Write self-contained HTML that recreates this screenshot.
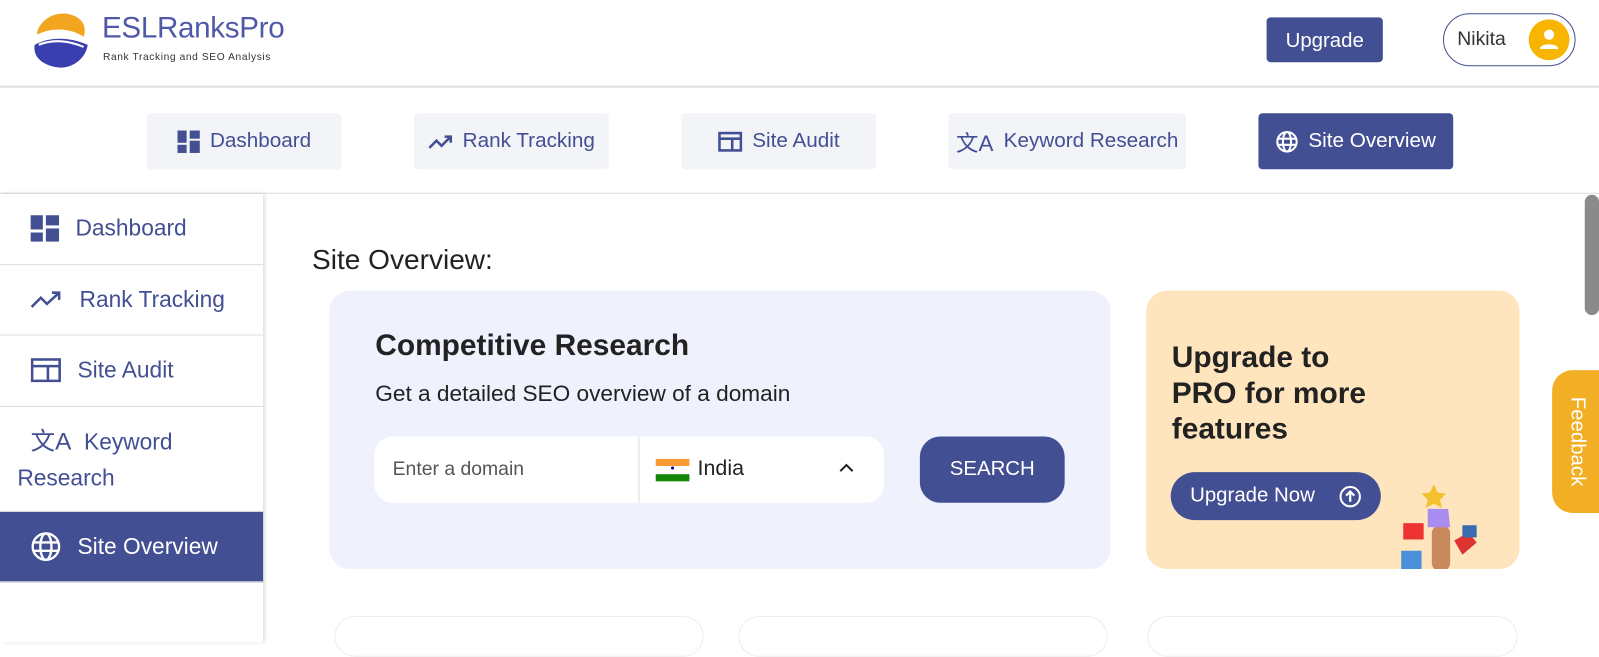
<!DOCTYPE html>
<html><head><meta charset="utf-8"><style>
*{box-sizing:border-box;margin:0;padding:0}
html,body{width:1599px;height:624px;overflow:hidden;background:#fff}
body{font-family:"Liberation Sans",sans-serif;color:#222}
#w{position:absolute;left:0;top:0;width:1568px;height:612px;transform:scale(1.0198);transform-origin:0 0}
.hdr{position:absolute;left:0;top:0;width:1568px;height:86px;border-bottom:2px solid #ddd}
.nav{position:absolute;top:88px;left:0;width:1568px;height:102px;border-bottom:1px solid #ddd}
.nb{position:absolute;top:23px;height:55px;background:#f3f4f8;border-radius:4px;display:flex;align-items:center;justify-content:center;gap:10px;font-size:20.3px;color:#434f93}
.nb.a{background:#434f93;color:#fff}
.side{position:absolute;left:0;top:190px;width:258px;height:440px;box-shadow:2px 0 4px rgba(0,0,0,.15)}
.si{height:69.5px;border-bottom:1px solid #ddd;display:flex;align-items:center;padding-left:30px;gap:16px;font-size:22.3px;color:#434f93}
.si.a{background:#434f93;color:#fff}
</style></head><body><div id="w">
<div class="hdr">
<svg style="position:absolute;left:30px;top:10px" width="58" height="58" viewBox="0 0 58 58"><path d="M6 24C8 8 28 -2 44 6C52 10 55 18 52 26C40 18 22 16 6 24Z" fill="#f2a51f"/><path d="M4 34C18 26 38 26 56 34C54 48 40 58 26 56C12 54 2 46 4 34Z" fill="#3a3fb0"/><path d="M6 28C22 22 40 24 54 30" stroke="#fff" stroke-width="3" fill="none"/><path d="M8 34C22 28 38 30 52 36" stroke="#fff" stroke-width="2" fill="none"/></svg>
<div style="position:absolute;left:100px;top:12px;font-size:29px;color:#5058a8;letter-spacing:-0.3px">ESLRanksPro</div>
<div style="position:absolute;left:101px;top:51px;font-size:10px;color:#333;letter-spacing:.6px">Rank Tracking and SEO Analysis</div>
<div style="position:absolute;left:1242px;top:17px;width:114px;height:44px;background:#434f93;border-radius:4px;color:#fff;font-size:20px;line-height:46px;text-align:center">Upgrade</div>
<div style="position:absolute;left:1415px;top:13px;width:130px;height:52px;border:1px solid #434f93;border-radius:26px;display:flex;align-items:center;padding-left:13px;font-size:19px;color:#333">Nikita<div style="position:absolute;right:5px;top:5px;width:40px;height:40px;border-radius:50%;background:#f7b500"><svg width="40" height="40" viewBox="0 0 40 40"><circle cx="20" cy="15" r="5" fill="#fff"/><path d="M11 29c0-6 18-6 18 0z" fill="#fff"/></svg></div></div>
</div>
<div class="nav">
<div class="nb" style="left:144px;width:191px"><svg width="22" height="22"><rect x="0" y="0" width="9" height="12" fill="#434f93"/><rect x="12" y="0" width="10" height="8" fill="#434f93"/><rect x="0" y="14" width="9" height="8" fill="#434f93"/><rect x="12" y="10" width="10" height="12" fill="#434f93"/></svg>Dashboard</div>
<div class="nb" style="left:406px;width:191px"><svg width="24" height="16"><path d="M1 14l7-7 5 5 9-9M16 3h6v6" stroke="#434f93" stroke-width="2.5" fill="none"/></svg>Rank Tracking</div>
<div class="nb" style="left:668px;width:191px"><svg width="24" height="20"><rect x="1.5" y="1.5" width="21" height="17" fill="none" stroke="#434f93" stroke-width="2.5"/><path d="M1 7h22M14 7v12" stroke="#434f93" stroke-width="2.5"/></svg>Site Audit</div>
<div class="nb" style="left:930px;width:233px"><span style="font-size:22px">文A</span>Keyword Research</div>
<div class="nb a" style="left:1234px;width:191px"><svg width="22" height="22" viewBox="0 0 22 22"><circle cx="11" cy="11" r="9.5" stroke="#fff" stroke-width="2" fill="none"/><ellipse cx="11" cy="11" rx="4" ry="9.5" stroke="#fff" stroke-width="2" fill="none"/><path d="M2 8h18M2 14h18" stroke="#fff" stroke-width="2"/></svg>Site Overview</div>
</div>
<div class="side">
<div class="si"><svg width="28" height="26"><rect x="0" y="0" width="12" height="14" fill="#434f93"/><rect x="15" y="0" width="13" height="10" fill="#434f93"/><rect x="0" y="17" width="12" height="9" fill="#434f93"/><rect x="15" y="13" width="13" height="13" fill="#434f93"/></svg>Dashboard</div>
<div class="si"><svg width="32" height="18"><path d="M1 16l9-9 6 6 12-11M21 2h7v7" stroke="#434f93" stroke-width="2.5" fill="none"/></svg>Rank Tracking</div>
<div class="si"><svg width="30" height="24"><rect x="1.5" y="1.5" width="27" height="21" fill="none" stroke="#434f93" stroke-width="2.5"/><path d="M1 8h28M17 8v15" stroke="#434f93" stroke-width="2.5"/></svg>Site Audit</div>
<div class="si" style="height:103px;display:block;padding:17px 0 0 17px;line-height:35px"><span style="margin-left:13px;font-size:24px">文A</span>&nbsp; Keyword<br>Research</div>
<div class="si a"><svg width="30" height="30" viewBox="0 0 22 22"><circle cx="11" cy="11" r="9.5" stroke="#fff" stroke-width="1.7" fill="none"/><ellipse cx="11" cy="11" rx="4" ry="9.5" stroke="#fff" stroke-width="1.7" fill="none"/><path d="M2 8h18M2 14h18" stroke="#fff" stroke-width="1.7"/></svg>Site Overview</div>
</div>
<div style="position:absolute;left:306px;top:239px;font-size:27.5px;color:#222">Site Overview:</div>
<div style="position:absolute;left:323px;top:285px;width:766px;height:273px;background:#eff1fd;border-radius:20px">
<div style="position:absolute;left:45px;top:37px;font-size:29.3px;font-weight:bold;color:#222">Competitive Research</div>
<div style="position:absolute;left:45px;top:88px;font-size:22.2px;color:#222">Get a detailed SEO overview of a domain</div>
<div style="position:absolute;left:44px;top:143px;width:500px;height:65px;background:#fff;border-radius:18px">
<div style="position:absolute;left:18px;top:22px;font-size:19px;color:#555">Enter a domain</div>
<div style="position:absolute;left:259px;top:0;width:1px;height:65px;background:#ddd"></div>
<div style="position:absolute;left:276px;top:22px;width:33px;height:22px"><div style="height:7px;background:#f93"></div><div style="height:8px;background:#fff;text-align:center;line-height:6px;font-size:7px;color:#008">●</div><div style="height:7px;background:#138808"></div></div>
<div style="position:absolute;left:317px;top:20px;font-size:21px;color:#222">India</div>
<svg style="position:absolute;left:456px;top:26px" width="14" height="10"><path d="M1 8l6-6 6 6" stroke="#222" stroke-width="2" fill="none"/></svg>
</div>
<div style="position:absolute;left:579px;top:143px;width:142px;height:65px;background:#434f93;border-radius:20px;color:#fff;font-size:20px;display:flex;align-items:center;justify-content:center">SEARCH</div>
</div>
<div style="position:absolute;left:1124px;top:285px;width:366px;height:273px;background:#ffe5bd;border-radius:20px;overflow:hidden">
<div style="position:absolute;left:25px;top:48px;font-size:29.3px;font-weight:bold;line-height:35px;color:#222">Upgrade to<br>PRO for more<br>features</div>
<div style="position:absolute;left:24px;top:178px;width:206px;height:47px;background:#434f93;border-radius:24px;color:#fff;font-size:20px;display:flex;align-items:center;padding-left:19px">Upgrade Now<svg style="position:absolute;right:19px" width="22" height="22"><circle cx="11" cy="11" r="9.5" stroke="#fff" stroke-width="2" fill="none"/><path d="M11 16V7M7 10l4-4 4 4" stroke="#fff" stroke-width="2.2" fill="none"/></svg></div>
<svg style="position:absolute;left:240px;top:190px" width="100" height="85"><path d="M42 0l4 8 8 1-6 6 2 8-8-4-8 4 2-8-6-6 8-1z" fill="#f5c030"/><rect x="40" y="40" width="18" height="45" rx="8" fill="#c8895c"/><path d="M36 24l20 0 2 18h-22z" fill="#a88cf0"/><rect x="12" y="38" width="20" height="16" fill="#e33"/><path d="M10 65h20v20h-20z" fill="#4a90d9"/><path d="M62 55l14-8 8 10-14 12z" fill="#d33"/><path d="M70 40h14v12h-14z" fill="#3a6db0"/></svg>
</div>
<div style="position:absolute;left:1522px;top:363px;width:50px;height:140px;background:#f2ae24;border-radius:20px 0 0 20px"><div style="position:absolute;top:26px;left:36px;transform:rotate(90deg);transform-origin:left top;color:#fff;font-size:20px;white-space:nowrap">Feedback</div></div>
<div style="position:absolute;left:1554px;top:191px;width:14px;height:118px;background:#8a8a8a;border-radius:7px"></div>
<div style="position:absolute;left:328px;top:604px;width:362px;height:40px;border:1px solid #eee;border-radius:20px"></div>
<div style="position:absolute;left:724px;top:604px;width:362px;height:40px;border:1px solid #eee;border-radius:20px"></div>
<div style="position:absolute;left:1125px;top:604px;width:363px;height:40px;border:1px solid #eee;border-radius:20px"></div>
</div></body></html>
